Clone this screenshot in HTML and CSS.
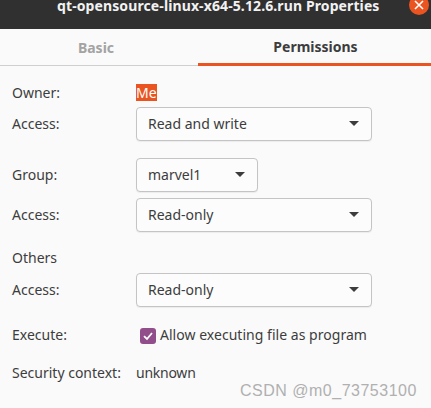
FILE: index.html
```html
<!DOCTYPE html>
<html lang="en">

<head>
    <meta charset="UTF-8">
    <title>Properties</title>
    <link rel="stylesheet" href="styles.css">
</head>

<body>
    <div class="window">
        <header class="titlebar">
            <span class="titlebar__title">qt-opensource-linux-x64-5.12.6.run Properties</span>
            <span class="titlebar__close">
                <svg width="10" height="10" viewBox="0 0 10 10">
                    <path d="M1 1L9 9M9 1L1 9" stroke="#fff" stroke-width="1.6" fill="none" />
                </svg>
            </span>
        </header>
        <nav class="tabs">
            <div class="tab">Basic</div>
            <div class="tab tab--active">Permissions</div>
        </nav>
        <form class="form">
            <div class="row row--text row--owner">
                <span class="row__label">Owner:</span>
                <span class="selected">Me</span>
            </div>
            <div class="row row--first">
                <span class="row__label">Access:</span>
                <div class="combo combo--wide">Read and write<span class="combo__arrow"></span></div>
            </div>
            <div class="row row--group">
                <span class="row__label">Group:</span>
                <div class="combo combo--small">marvel1<span class="combo__arrow"></span></div>
            </div>
            <div class="row row--access">
                <span class="row__label">Access:</span>
                <div class="combo combo--wide">Read-only<span class="combo__arrow"></span></div>
            </div>
            <div class="row row--text row--others">
                <span class="row__label">Others</span>
            </div>
            <div class="row row--last">
                <span class="row__label">Access:</span>
                <div class="combo combo--wide">Read-only<span class="combo__arrow"></span></div>
            </div>
            <div class="row row--text row--execute">
                <span class="row__label">Execute:</span>
                <label class="check">
                    <span class="check__box">
                        <svg width="12" height="12" viewBox="0 0 12 12">
                            <path d="M2 6.2L5 9L10 3" stroke="#fff" stroke-width="1.8" fill="none" />
                        </svg>
                    </span>
                    <span class="check__text">Allow executing file as program</span>
                </label>
            </div>
            <div class="row row--text row--security">
                <span class="row__label">Security context:</span>
                <span class="row__value">unknown</span>
            </div>
        </form>
        <div class="watermark">CSDN @m0_73753100</div>
    </div>
</body>

</html>
```

FILE: styles.css
```css
:root {
    --color-bg: #fafafa;
    --color-text: #3d3d3d;
    --color-accent: #e95420;
    --color-border: #c4c4c4;
    --color-title: #303030;
}

body {
    margin: 0;
    background-color: var(--color-bg);
    color: var(--color-text);
    font-family: 'Noto Sans', sans-serif;
    font-size: 14px;
}

.window {
    position: relative;
    height: 408px;
    overflow: hidden;
}

.titlebar {
    position: relative;
    height: 29px;
    background-color: var(--color-title);
    color: #f2f2f2;
    overflow: hidden;
}

.titlebar__title {
    display: block;
    margin-top: -4px;
    padding-left: 57px;
    font-size: 14px;
    font-weight: 700;
    line-height: 20px;
    letter-spacing: 0.11px;
    white-space: nowrap;
}

.titlebar__close {
    position: absolute;
    top: -5px;
    left: 409px;
    width: 20px;
    height: 20px;
    border-radius: 50%;
    background-color: var(--color-accent);
    display: flex;
    align-items: center;
    justify-content: center;
}

.tabs {
    display: flex;
    height: 37px;
}

.tab {
    flex: 0 0 198px;
    box-sizing: border-box;
    padding-right: 6px;
    display: flex;
    align-items: center;
    justify-content: center;
    border-bottom: 1px solid #cfcfcf;
    font-weight: 700;
    font-size: 14px;
    color: #a3a3a3;
}

.tab--active {
    flex: 1;
    padding-right: 0;
    padding-left: 2px;
    border-bottom: 3px solid var(--color-accent);
    color: var(--color-text);
}

.form {
    display: flex;
    flex-direction: column;
    padding-left: 12px;
}

.row {
    display: flex;
    align-items: center;
    min-height: 34px;
}

.row--text {
    min-height: 20px;
}

.row--owner { margin-top: 16px; }
.row--first { margin-top: 5px; }
.row--group { margin-top: 17px; }
.row--access { margin-top: 6px; }
.row--others { margin-top: 16px; }
.row--last { margin-top: 4px; }
.row--execute { margin-top: 18px; }
.row--security { margin-top: 17px; }

.row__label {
    flex: 0 0 124px;
    padding-bottom: 2px;
}

.row--owner .row__label {
    padding-bottom: 0;
}

.row__value {
    padding-bottom: 2px;
    letter-spacing: -0.25px;
}

.selected {
    background-color: var(--color-accent);
    color: #fff;
    line-height: 17px;
}

.combo {
    box-sizing: border-box;
    height: 34px;
    padding: 0 12px 2px 11px;
    display: flex;
    align-items: center;
    justify-content: space-between;
    background-color: #fcfcfc;
    border: 1px solid var(--color-border);
    border-radius: 4px;
    box-shadow: 0 1px 1px rgba(0, 0, 0, 0.06);
}

.combo--wide {
    width: 236px;
}

.combo--small {
    width: 122px;
}

.combo__arrow {
    width: 0;
    height: 0;
    border-left: 5px solid transparent;
    border-right: 5px solid transparent;
    border-top: 5px solid #3d3d3d;
}

.check {
    display: flex;
    align-items: center;
    gap: 4px;
    margin-left: 4px;
}

.check__text {
    padding-bottom: 2px;
    letter-spacing: 0.03px;
}

.check__box {
    width: 16px;
    height: 16px;
    border-radius: 3px;
    background-color: #924d8b;
    display: flex;
    align-items: center;
    justify-content: center;
}

.watermark {
    position: absolute;
    top: 382px;
    left: 240px;
    font-family: 'Liberation Sans', sans-serif;
    font-size: 16px;
    line-height: 18px;
    letter-spacing: 0.5px;
    color: #b0b0b0;
    white-space: nowrap;
}
```
